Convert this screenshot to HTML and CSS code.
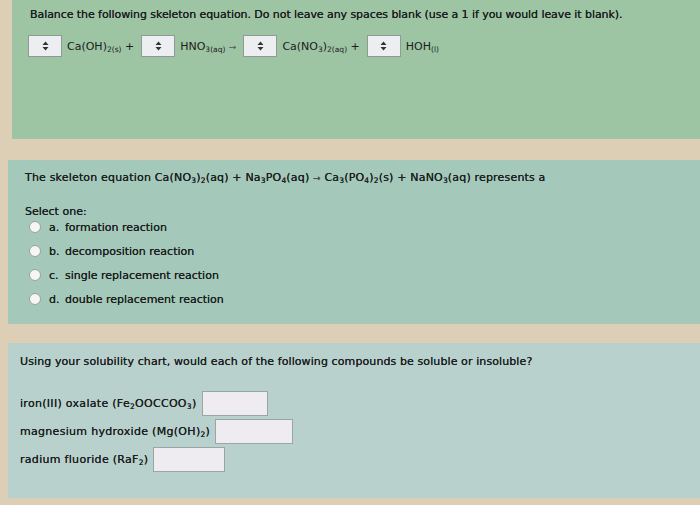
FILE: index.html
```html
<!DOCTYPE html>
<html>
<head>
<meta charset="utf-8">
<link rel="stylesheet" href="styles.css">
</head>
<body>
<div class="page">
  <section class="panel p1">
    <p class="q q1">Balance the following skeleton equation. Do not leave any spaces blank (use a 1 if you would leave it blank).</p>
    <div class="eq">
      <span class="sel"><svg class="arr" width="7" height="10" viewBox="0 0 7 10"><path d="M3.5 0.5 L6.5 4 L0.5 4 Z M0.5 6 L6.5 6 L3.5 9.5 Z" fill="#333"/></svg></span>
      <span class="chem">Ca(OH)<sub>2(s)</sub> +</span>
      <span class="sel"><svg class="arr" width="7" height="10" viewBox="0 0 7 10"><path d="M3.5 0.5 L6.5 4 L0.5 4 Z M0.5 6 L6.5 6 L3.5 9.5 Z" fill="#333"/></svg></span>
      <span class="chem">HNO<sub>3(aq)</sub> <span class="to">&#x2192;</span></span>
      <span class="sel"><svg class="arr" width="7" height="10" viewBox="0 0 7 10"><path d="M3.5 0.5 L6.5 4 L0.5 4 Z M0.5 6 L6.5 6 L3.5 9.5 Z" fill="#333"/></svg></span>
      <span class="chem">Ca(NO<sub>3</sub>)<sub>2(aq)</sub> +</span>
      <span class="sel"><svg class="arr" width="7" height="10" viewBox="0 0 7 10"><path d="M3.5 0.5 L6.5 4 L0.5 4 Z M0.5 6 L6.5 6 L3.5 9.5 Z" fill="#333"/></svg></span>
      <span class="chem">HOH<sub>(l)</sub></span>
    </div>
  </section>
  <section class="panel p2">
    <p class="q q2">The skeleton equation Ca(NO<sub>3</sub>)<sub>2</sub>(aq) + Na<sub>3</sub>PO<sub>4</sub>(aq) <span class="to">&#x2192;</span> Ca<sub>3</sub>(PO<sub>4</sub>)<sub>2</sub>(s) + NaNO<sub>3</sub>(aq) represents a</p>
    <p class="select">Select one:</p>
    <ul class="opts">
      <li><span class="radio"></span><span class="lt">a.</span>formation reaction</li>
      <li><span class="radio"></span><span class="lt">b.</span>decomposition reaction</li>
      <li><span class="radio"></span><span class="lt">c.</span>single replacement reaction</li>
      <li><span class="radio"></span><span class="lt">d.</span>double replacement reaction</li>
    </ul>
  </section>
  <section class="panel p3">
    <p class="q q3">Using your solubility chart, would each of the following compounds be soluble or insoluble?</p>
    <div class="rows">
      <div class="row"><span>iron(III) oxalate (Fe<sub>2</sub>OOCCOO<sub>3</sub>)</span><span class="box w1"></span></div>
      <div class="row"><span>magnesium hydroxide (Mg(OH)<sub>2</sub>)</span><span class="box w2"></span></div>
      <div class="row"><span>radium fluoride (RaF<sub>2</sub>)</span><span class="box w3"></span></div>
    </div>
  </section>
</div>
</body>
</html>
```
FILE: styles.css
```css
html, body {
  margin: 0;
  padding: 0;
}
body {
  width: 700px;
  height: 505px;
  overflow: hidden;
  background: #dccfb5;
  font-family: "DejaVu Sans", Verdana, sans-serif;
  font-size: 11px;
  color: #1c201e;
  text-shadow: 0 0 0.4px #1c201e;
}
.page {
  display: flex;
  flex-direction: column;
}
.panel {
  box-sizing: border-box;
}
p { margin: 0; }
sub {
  font-size: 7.5px;
  vertical-align: -2px;
  line-height: 0;
}
.to { color: #555; font-size: 9px; }
.p1 {
  margin-left: 12px;
  height: 139px;
  background: #9dc4a3;
  padding: 8px 0 0 18px;
}
.q1 { letter-spacing: -0.07px; }
.eq {
  display: flex;
  align-items: center;
  margin-top: 14px;
  margin-left: -2px;
}
.sel {
  width: 34px;
  height: 22px;
  background: #eceef2;
  border: 1px solid #8f9a96;
  box-sizing: border-box;
  display: flex;
  align-items: center;
  justify-content: center;
}
.arr { display: block; }
.chem {
  margin: 0 7px 0 5px;
  white-space: nowrap;
  text-shadow: none;
}
.p2 {
  margin-top: 21px;
  margin-left: 8px;
  height: 164px;
  background: #a4c9bb;
  padding: 11px 0 0 17px;
}
.q2 { letter-spacing: 0.18px; }
.select {
  margin-top: 21px;
}
.opts {
  list-style: none;
  margin: -3px 0 0 0;
  padding: 0 0 0 4px;
}
.opts li {
  display: flex;
  align-items: center;
  height: 24px;
}
.radio {
  width: 12px;
  height: 12px;
  border-radius: 50%;
  background: #f6f6f4;
  border: 1px solid #9aa29e;
  box-sizing: border-box;
  margin-right: 8px;
}
.lt { width: 16px; }
.p3 {
  margin-top: 19px;
  margin-left: 8px;
  height: 155px;
  background: #b8d1cd;
  padding: 12px 0 0 12px;
}
.q3 { letter-spacing: 0.1px; }
.rows {
  margin-top: 23px;
  display: flex;
  flex-direction: column;
  gap: 3px;
}
.row {
  display: flex;
  align-items: center;
  gap: 5px;
  letter-spacing: 0.3px;
}
.box {
  height: 25px;
  background: #eeecf0;
  border: 1px solid #9aa6a4;
  box-sizing: border-box;
}
.w1 { width: 66px; }
.w2 { width: 78px; }
.w3 { width: 72px; }
```
